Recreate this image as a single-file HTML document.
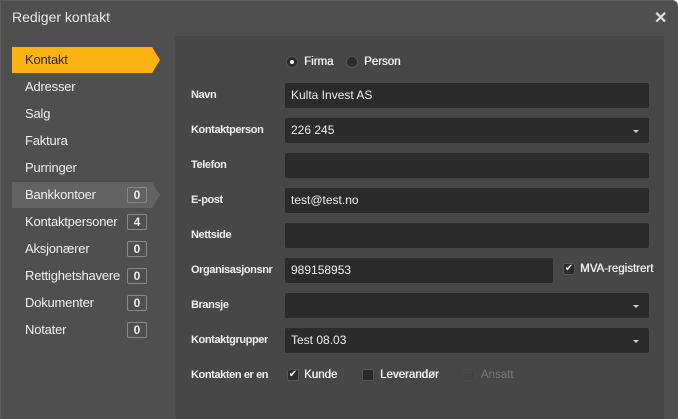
<!DOCTYPE html><html><head><style>
*{margin:0;padding:0;box-sizing:border-box}
body{width:678px;height:419px;background:#fff;font-family:"Liberation Sans",Arial,sans-serif;overflow:hidden}
.dlg{position:absolute;left:0;top:0;width:678px;height:419px;background:#4f4f4f;border-radius:0 6px 0 0;box-shadow:inset 1px 1px 0 #5c5c5c}
.title{position:absolute;left:12px;top:9px;color:#e8e8e8;font-size:14px}
.x{position:absolute;left:654px;top:8px;color:#e0e0e0;font-size:16px;font-weight:bold}
.nav{position:absolute;left:12px;font-size:13px;color:#f0f0f0;height:26px;line-height:26px;padding-left:13px;width:138px;letter-spacing:-0.2px}
.sel{background:#fbb314;color:#2a2a2a;clip-path:polygon(0 0,140px 0,148px 13px,140px 26px,0 26px);width:148px}
.hl{background:#626262;clip-path:polygon(0 0,140px 0,148px 13px,140px 26px,0 26px);width:148px}
.b{position:absolute;left:115px;top:5px;width:20px;height:16px;border:1px solid #8a8a8a;border-radius:2px;font-size:12px;font-weight:bold;line-height:14px;text-align:center;color:#eee;letter-spacing:0}
.panel{position:absolute;left:175px;top:36px;width:489px;height:383px;background:#474747}
.lbl{position:absolute;left:191px;font-size:11px;color:#f0f0f0;font-weight:bold;letter-spacing:-0.4px}
.in{position:absolute;left:285px;width:364px;height:25px;background:#2b2b2b;border-radius:2px;color:#f0f0f0;font-size:12px;line-height:25px;padding-left:6px}
.dd:after{content:"";position:absolute;right:10px;top:12px;border:3px solid transparent;border-top:3px solid #ccc;border-bottom:0}
.t{position:absolute;font-size:11.5px;color:#f0f0f0;text-shadow:0.4px 0 0 #f0f0f0}
.rad{position:absolute;width:12px;height:12px;border-radius:50%;background:#2b2b2b;border:1px solid #555}
.cb{position:absolute;width:12px;height:12px;background:#2b2b2b;border:1px solid #555;border-radius:2px;color:#eee;font-size:10px;line-height:10px;text-align:center}
</style></head><body><div class="dlg">
<div class="title">Rediger kontakt</div><div class="x">✕</div>
<div class="nav sel" style="top:47px">Kontakt</div>
<div class="nav" style="top:74px">Adresser</div>
<div class="nav" style="top:101px">Salg</div>
<div class="nav" style="top:128px">Faktura</div>
<div class="nav" style="top:155px">Purringer</div>
<div class="nav hl" style="top:182px">Bankkontoer<span class="b">0</span></div>
<div class="nav" style="top:209px">Kontaktpersoner<span class="b">4</span></div>
<div class="nav" style="top:236px">Aksjonærer<span class="b">0</span></div>
<div class="nav" style="top:263px">Rettighetshavere<span class="b">0</span></div>
<div class="nav" style="top:290px">Dokumenter<span class="b">0</span></div>
<div class="nav" style="top:317px">Notater<span class="b">0</span></div>
<div class="panel"></div>
<div class="rad" style="left:286px;top:56px"><div style="position:absolute;left:3px;top:3px;width:4px;height:4px;border-radius:50%;background:#eee"></div></div>
<div class="t" style="left:304px;top:56px">Firma</div>
<div class="rad" style="left:346px;top:56px"></div>
<div class="t" style="left:364px;top:56px">Person</div>
<div class="lbl" style="top:89px">Navn</div><div class="in" style="top:83px">Kulta Invest AS</div>
<div class="lbl" style="top:124px">Kontaktperson</div><div class="in dd" style="top:118px">226 245</div>
<div class="lbl" style="top:159px">Telefon</div><div class="in" style="top:153px"></div>
<div class="lbl" style="top:194px">E-post</div><div class="in" style="top:188px">test@test.no</div>
<div class="lbl" style="top:229px">Nettside</div><div class="in" style="top:223px"></div>
<div class="lbl" style="top:264px">Organisasjonsnr</div><div class="in" style="top:258px;width:268px">989158953</div>
<div class="cb" style="left:563px;top:263px">✔</div><div class="t" style="left:580px;top:263px">MVA-registrert</div>
<div class="lbl" style="top:299px">Bransje</div><div class="in dd" style="top:293px"></div>
<div class="lbl" style="top:334px">Kontaktgrupper</div><div class="in dd" style="top:328px">Test 08.03</div>
<div class="lbl" style="top:369px">Kontakten er en</div>
<div class="cb" style="left:287px;top:369px">✔</div><div class="t" style="left:304px;top:369px">Kunde</div>
<div class="cb" style="left:362px;top:369px"></div><div class="t" style="left:380px;top:369px">Leverandør</div>
<div class="cb" style="left:463px;top:369px;background:#444;border-color:#4a4a4a"></div><div class="t" style="left:481px;top:369px;color:#777;text-shadow:none">Ansatt</div>
</div></body></html>
